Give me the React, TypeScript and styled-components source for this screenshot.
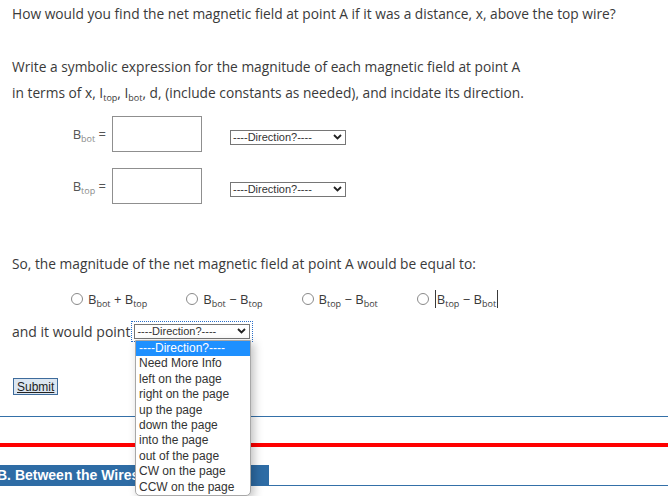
import React from 'react';
import styled, { createGlobalStyle } from 'styled-components';

const Global = createGlobalStyle`
  html, body {
    margin: 0;
    padding: 0;
    background: #fff;
  }
  body {
    font-family: "Open Sans", "Liberation Sans", sans-serif;
    color: #3a3a3a;
    overflow: hidden;
  }
`;

const Page = styled.div`
  width: 668px;
  height: 496px;
  position: relative;
  overflow: hidden;
`;

const Para = styled.p<{ $top: number }>`
  margin: ${(p) => p.$top}px 0 0 12px;
  font-size: 13.75px;
  line-height: 20px;
  white-space: nowrap;
`;

const Sub = styled.sub<{ $light?: boolean }>`
  font-size: 9px;
  vertical-align: -3px;
  line-height: 0;
  color: ${(p) => (p.$light ? '#8a8a8a' : 'inherit')};
`;

const FieldRow = styled.div<{ $top: number }>`
  display: flex;
  align-items: center;
  margin-top: ${(p) => p.$top}px;
  padding-left: 60px;
`;

const FieldLabel = styled.span`
  width: 46px;
  text-align: right;
  font-size: 13px;
  color: #555;
  margin-right: 6px;
  white-space: nowrap;
`;

const TextBox = styled.div`
  width: 88px;
  height: 34px;
  border: 1px solid #8f8f8f;
  background: #fff;
`;

const SelectBox = styled.div<{ $left?: number; $drop?: number; $focus?: boolean }>`
  position: relative;
  box-sizing: border-box;
  width: 116px;
  height: 15px;
  margin-left: ${(p) => p.$left ?? 0}px;
  margin-top: ${(p) => p.$drop ?? 0}px;
  border: 1px solid #767676;
  background: #fff;
  font-family: "Liberation Sans", Arial, sans-serif;
  font-size: 11px;
  line-height: 13px;
  color: #333;
  padding-left: 2px;
  outline: ${(p) => (p.$focus ? '1px dotted #2a6fc9' : 'none')};
  outline-offset: 2px;
  svg {
    position: absolute;
    right: 3px;
    top: 3px;
  }
`;

const Chevron = () => (
  <svg width="9" height="6" viewBox="0 0 9 6">
    <path d="M1 1 L4.5 4.5 L8 1" fill="none" stroke="#222" strokeWidth="1.8" />
  </svg>
);

const RadioRow = styled.div`
  display: flex;
  gap: 39px;
  margin: 16px 0 0 71px;
`;

const RadioItem = styled.label`
  display: flex;
  align-items: center;
  font-size: 13px;
  color: #3a3a3a;
  white-space: nowrap;
`;

const RadioCircle = styled.span`
  width: 10px;
  height: 10px;
  border: 1px solid #8a8a8a;
  border-radius: 50%;
  margin-right: 5px;
  background: #fff;
`;

const Abs = styled.span`
  border-left: 1px solid #3a3a3a;
  border-right: 1px solid #3a3a3a;
  padding: 0 1px;
  margin: 0 1px;
`;

const PointRow = styled.div`
  display: flex;
  align-items: center;
  margin: 14px 0 0 12px;
  font-size: 14px;
  position: relative;
`;

const PointText = styled.span`
  margin-right: 4px;
`;

const SubmitButton = styled.button`
  display: block;
  margin: 37px 0 0 13px;
  padding: 0 3px;
  height: 17px;
  font-family: "Liberation Sans", Arial, sans-serif;
  font-size: 12px;
  color: #222;
  text-decoration: underline;
  background: #dce6f1;
  border: 1px solid #3e6c9c;
  border-radius: 0;
`;

const BlueRule = styled.hr`
  margin: 21px 0 0;
  border: 0;
  border-top: 1px solid #3470a8;
`;

const RedRule = styled.hr`
  margin: 26px 0 0;
  border: 0;
  height: 4px;
  background: #ff0000;
`;

const SectionHead = styled.div`
  display: flex;
  align-items: flex-end;
  margin-top: 18px;
`;

const SectionTitle = styled.div`
  width: 272px;
  height: 21px;
  margin-left: -3px;
  background: #2e6ca5;
  color: #fff;
  font-family: "Liberation Sans", Arial, sans-serif;
  font-weight: bold;
  font-size: 14px;
  line-height: 21px;
  white-space: nowrap;
  overflow: hidden;
`;

const SectionLine = styled.div`
  flex: 1;
  border-bottom: 1px solid #3470a8;
`;

const DropList = styled.ul`
  position: absolute;
  left: 135px;
  top: 340px;
  width: 114px;
  margin: 0;
  padding: 0;
  list-style: none;
  background: #fff;
  border: 1px solid #a8a8a8;
  border-radius: 0 0 5px 5px;
  box-shadow: 3px 3px 10px rgba(0, 0, 0, 0.25);
  font-family: "Liberation Sans", Arial, sans-serif;
  font-size: 12px;
  color: #333;
  overflow: hidden;
`;

const DropItem = styled.li<{ $active?: boolean }>`
  height: 15.4px;
  line-height: 15px;
  padding-left: 3px;
  white-space: nowrap;
  background: ${(p) => (p.$active ? '#1e90ff' : 'transparent')};
  color: ${(p) => (p.$active ? '#fff' : '#333')};
`;

const options = [
  '----Direction?----',
  'Need More Info',
  'left on the page',
  'right on the page',
  'up the page',
  'down the page',
  'into the page',
  'out of the page',
  'CW on the page',
  'CCW on the page',
];

const B = ({ s, light }: { s: string; light?: boolean }) => (
  <>
    B<Sub $light={light}>{s}</Sub>
  </>
);

export default function App() {
  return (
    <Page>
      <Global />
      <Para $top={4}>How would you find the net magnetic field at point A if it was a distance, x, above the top wire?</Para>
      <Para $top={33}>Write a symbolic expression for the magnitude of each magnetic field at point A</Para>
      <Para $top={6}>
        in terms of x, I<Sub>top</Sub>, I<Sub>bot</Sub>, d, (include constants as needed), and incidate its direction.
      </Para>

      <FieldRow $top={13}>
        <FieldLabel>
          <B s="bot" light /> =
        </FieldLabel>
        <TextBox />
        <SelectBox $left={28} $drop={6}>
          ----Direction?----
          <Chevron />
        </SelectBox>
      </FieldRow>
      <FieldRow $top={16}>
        <FieldLabel>
          <B s="top" light /> =
        </FieldLabel>
        <TextBox />
        <SelectBox $left={28} $drop={6}>
          ----Direction?----
          <Chevron />
        </SelectBox>
      </FieldRow>

      <Para $top={50}>So, the magnitude of the net magnetic field at point A would be equal to:</Para>

      <RadioRow>
        <RadioItem>
          <RadioCircle />
          <span>
            <B s="bot" /> + <B s="top" />
          </span>
        </RadioItem>
        <RadioItem>
          <RadioCircle />
          <span>
            <B s="bot" /> − <B s="top" />
          </span>
        </RadioItem>
        <RadioItem>
          <RadioCircle />
          <span>
            <B s="top" /> − <B s="bot" />
          </span>
        </RadioItem>
        <RadioItem>
          <RadioCircle />
          <Abs>
            <B s="top" /> − <B s="bot" />
          </Abs>
        </RadioItem>
      </RadioRow>

      <PointRow>
        <PointText>and it would point</PointText>
        <SelectBox $focus>
          ----Direction?----
          <Chevron />
        </SelectBox>
      </PointRow>

      <SubmitButton>Submit</SubmitButton>
      <BlueRule />
      <RedRule />
      <SectionHead>
        <SectionTitle>B. Between the Wires</SectionTitle>
        <SectionLine />
      </SectionHead>

      <DropList>
        {options.map((o, i) => (
          <DropItem key={o} $active={i === 0}>
            {o}
          </DropItem>
        ))}
      </DropList>
    </Page>
  );
}
